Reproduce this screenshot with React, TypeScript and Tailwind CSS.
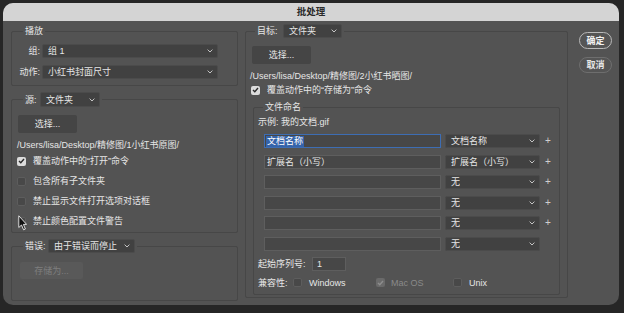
import React from "react";

const Chevron = () => (
  <svg width="6" height="4" viewBox="0 0 6 4" className="shrink-0">
    <path d="M0.6 0.6 L3 3 L5.4 0.6" stroke="#c4c4c4" strokeWidth="1" fill="none" />
  </svg>
);

function Select({ value, className = "" }: { value: string; className?: string }) {
  return (
    <div
      className={`flex items-center justify-between h-[14px] bg-[#414141] border border-[#4b4b4b] rounded-[2px] pl-[5px] pr-[4px] ${className}`}
    >
      <span className="truncate">{value}</span>
      <Chevron />
    </div>
  );
}

function Check({ checked = false, disabled = false }: { checked?: boolean; disabled?: boolean }) {
  const box = checked
    ? disabled
      ? "bg-[#6a6a6a]"
      : "bg-[#dcdcdc]"
    : "bg-[#484848] border border-[#5d5d5d]";
  return (
    <span className={`w-[9px] h-[9px] rounded-[2px] flex items-center justify-center shrink-0 ${box}`}>
      {checked && (
        <svg width="7" height="6" viewBox="0 0 7 6">
          <path
            d="M1 3 L2.8 4.8 L6 1"
            stroke={disabled ? "#8e8e8e" : "#2b2b2b"}
            strokeWidth="1.4"
            fill="none"
          />
        </svg>
      )}
    </span>
  );
}

function CheckRow({ label, checked, cursor }: { label: string; checked?: boolean; cursor?: boolean }) {
  return (
    <div className="relative flex items-center h-[14px] pl-[5px] gap-[7px]">
      <Check checked={checked} />
      <span>{label}</span>
      {cursor && (
        <svg width="9" height="16" viewBox="0 0 9 16" className="absolute left-[6px] top-[1px]">
          <path
            d="M0.8 0.8 L0.8 12.5 L3.5 10 L5.6 14.8 L7.4 14 L5.4 9.4 L8.6 9.4 Z"
            fill="#111"
            stroke="#f0f0f0"
            strokeWidth="0.9"
          />
        </svg>
      )}
    </div>
  );
}

function NameRow({ text, option, plus = true, focused }: { text?: string; option: string; plus?: boolean; focused?: boolean }) {
  return (
    <div className="flex items-center h-[14px]">
      <div
        className={`ml-[10px] w-[177px] h-[14px] flex items-center pl-[1px] ${
          focused ? "bg-[#474747] border border-[#3d6db3]" : "bg-[#474747] border border-[#5e5e5e]"
        }`}
      >
        {text &&
          (focused ? (
            <span className="bg-[#3563aa] text-white leading-[11px] px-[1px]">{text}</span>
          ) : (
            <span className="px-[1px]">{text}</span>
          ))}
      </div>
      <Select value={option} className="ml-[4px] w-[95px]" />
      {plus && <span className="ml-[5px] text-[10px] text-[#cfcfcf]">+</span>}
    </div>
  );
}

export default function App() {
  return (
    <div className="w-[624px] h-[313px] bg-[#262626] pt-[3px] pl-[3px] font-['Liberation_Sans','Noto_Sans_CJK_SC',sans-serif] text-[9px] leading-[14px] text-[#e6e6e6]">
      <div className="w-[616px] h-[302px] rounded-[10px] overflow-hidden bg-[#535353] flex flex-col">
        <div className="h-[18px] shrink-0 bg-[#d4d4d4] flex items-center justify-center text-[9.5px] font-bold text-[#2a2a2a]">
          批处理
        </div>

        <div className="flex pl-[8px] pt-[3px]">
          {/* left column */}
          <div className="w-[227px] flex flex-col">
            <fieldset className="border border-[#474747] rounded-[2px] pb-[6px]">
              <legend className="ml-[11px] px-[2px] h-[14px]">播放</legend>
              <div className="mt-[6px] flex flex-col gap-[7px]">
                <div className="flex items-center h-[14px]">
                  <span className="w-[28px] text-right">组:</span>
                  <Select value="组 1" className="ml-[2px] w-[176px]" />
                </div>
                <div className="flex items-center h-[14px]">
                  <span className="w-[28px] text-right">动作:</span>
                  <Select value="小红书封面尺寸" className="ml-[2px] w-[176px]" />
                </div>
              </div>
            </fieldset>

            <fieldset className="mt-[6px] border border-[#474747] rounded-[2px] pb-[4px]">
              <legend className="ml-[11px] px-[2px]">
                <div className="flex items-center h-[15px]">
                  <span className="w-[15px]">源:</span>
                  <Select value="文件夹" className="w-[60px] h-[15px]" />
                </div>
              </legend>
              <button className="mt-[8px] ml-[6px] w-[59px] h-[18px] bg-[#454545] rounded-[2px] flex items-center justify-center">
                选择...
              </button>
              <div className="mt-[5px] pl-[5px] h-[14px] whitespace-nowrap">/Users/lisa/Desktop/精修图/1小红书原图/</div>
              <div className="mt-[2px] flex flex-col gap-[6px]">
                <CheckRow label="覆盖动作中的“打开”命令" checked />
                <CheckRow label="包含所有子文件夹" />
                <CheckRow label="禁止显示文件打开选项对话框" />
                <CheckRow label="禁止颜色配置文件警告" cursor />
              </div>
            </fieldset>

            <fieldset className="mt-[6px] border border-[#474747] rounded-[2px] pb-[21px]">
              <legend className="ml-[11px] px-[2px]">
                <div className="flex items-center h-[14px]">
                  <span className="w-[23px]">错误:</span>
                  <Select value="由于错误而停止" className="w-[87px]" />
                </div>
              </legend>
              <button className="mt-[9px] ml-[8px] w-[63px] h-[17px] bg-[#595959] rounded-[2px] flex items-center justify-center text-[#7e7e7e]">
                存储为...
              </button>
            </fieldset>
          </div>

          {/* right column */}
          <fieldset className="ml-[7px] w-[323px] border border-[#474747] rounded-[2px] pb-[2px] self-start">
            <legend className="ml-[9px] px-[2px]">
              <div className="flex items-center h-[14px]">
                <span className="w-[26px]">目标:</span>
                <Select value="文件夹" className="w-[59px]" />
              </div>
            </legend>
            <button className="mt-[8px] ml-[6px] w-[59px] h-[18px] bg-[#454545] rounded-[2px] flex items-center justify-center">
              选择...
            </button>
            <div className="mt-[5px] pl-[4px] h-[14px] whitespace-nowrap">/Users/lisa/Desktop/精修图/2小红书晒图/</div>
            <div className="flex items-center h-[14px] pl-[5px] gap-[7px]">
              <Check checked />
              <span>覆盖动作中的“存储为”命令</span>
            </div>

            <fieldset className="mt-[3px] mx-[7px] border border-[#474747] rounded-[2px] pb-[4px]">
              <legend className="ml-[9px] px-[2px] h-[14px]">文件命名</legend>
              <div className="mt-[1px] pl-[4px] h-[14px]">示例: 我的文档.gif</div>
              <div className="mt-[5px] flex flex-col gap-[6.6px]">
                <NameRow text="文档名称" option="文档名称" focused />
                <NameRow text="扩展名（小写）" option="扩展名（小写）" />
                <NameRow option="无" />
                <NameRow option="无" />
                <NameRow option="无" />
                <NameRow option="无" plus={false} />
              </div>
              <div className="mt-[6px] pl-[4px] flex items-center h-[14px]">
                <span className="w-[54px]">起始序列号:</span>
                <div className="w-[34px] h-[14px] bg-[#474747] border border-[#5e5e5e] flex items-center pl-[4px]">1</div>
              </div>
              <div className="mt-[5px] pl-[4px] flex items-center h-[14px]">
                <span className="w-[35px]">兼容性:</span>
                <div className="w-[83px] flex items-center gap-[7px]">
                  <Check />
                  <span>Windows</span>
                </div>
                <div className="w-[77px] flex items-center gap-[6px] text-[#8a8a8a]">
                  <Check checked disabled />
                  <span>Mac OS</span>
                </div>
                <div className="flex items-center gap-[7px]">
                  <Check />
                  <span>Unix</span>
                </div>
              </div>
            </fieldset>
          </fieldset>

          {/* buttons */}
          <div className="ml-[11px] pt-[8px] flex flex-col gap-[8px]">
            <button className="w-[33px] h-[17px] rounded-full border-[1.5px] border-[#b9b9b9] bg-[#555555] flex items-center justify-center font-bold text-[#f2f2f2]">
              确定
            </button>
            <button className="w-[33px] h-[16px] rounded-full border border-[#6e6e6e] bg-[#555555] flex items-center justify-center font-bold text-[#e6e6e6]">
              取消
            </button>
          </div>
        </div>
      </div>
    </div>
  );
}
